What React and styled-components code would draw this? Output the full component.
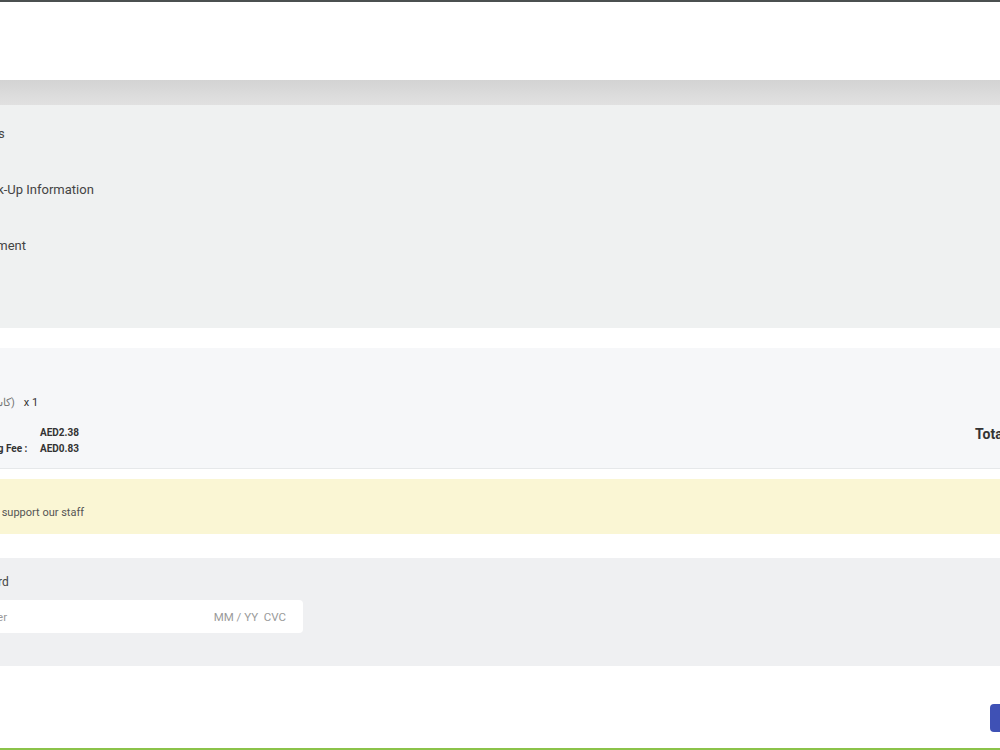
import styled, { createGlobalStyle } from "styled-components";

const GlobalStyle = createGlobalStyle`
	html, body {
		margin: 0;
		padding: 0;
		overflow: hidden;
		background: #ffffff;
		font-family: Roboto, "Liberation Sans", Arial, sans-serif;
	}
`;

const Page = styled.div`
	width: 1200px;
	height: 750px;
	margin-left: -100px;
	display: flex;
	flex-direction: column;
	border-top: 2px solid #4b5050;
	box-sizing: border-box;
`;

const Header = styled.header`
	height: 78px;
	background: #ffffff;
	flex-shrink: 0;
`;

const Band = styled.div`
	height: 25px;
	background: linear-gradient(#d3d3d3, #e1e1e1);
	flex-shrink: 0;
`;

const Steps = styled.section`
	background: #eff1f1;
	height: 223px;
	box-sizing: border-box;
	padding: 0 0 0 80px;
	flex-shrink: 0;
`;

const Step = styled.div`
	height: 56px;
	display: flex;
	align-items: center;
	font-size: 13px;
	color: #444;
	margin-left: ${(p) => p.$indent}px;
`;

const Summary = styled.section`
	margin-top: 20px;
	height: 121px;
	box-sizing: border-box;
	background: #f6f7f9;
	border-bottom: 1px solid #e6e8ea;
	padding: 48px 0 0 80px;
	display: flex;
	justify-content: space-between;
	flex-shrink: 0;
`;

const Items = styled.div`
	display: flex;
	flex-direction: column;
`;

const ItemLine = styled.div`
	font-size: 11px;
	color: #333;
	height: 14px;
	line-height: 14px;
	margin-left: -25px;
	display: flex;
	gap: 9px;
	margin-bottom: 15px;
`;

const Muted = styled.span`
	color: #777;
`;

const FeeRow = styled.div`
	display: grid;
	grid-template-columns: 87px auto;
	font-size: 10px;
	font-weight: 700;
	color: #333;
	height: 16px;
	line-height: 16px;
	margin-left: -27px;
`;

const TotalBox = styled.div`
	width: 125px;
	padding-top: 30px;
	font-size: 14px;
	font-weight: 700;
	color: #333;
`;

const Tip = styled.section`
	margin-top: 10px;
	height: 55px;
	box-sizing: border-box;
	background: #faf6d4;
	padding: 27px 0 0 80px;
	font-size: 11px;
	color: #555;
	flex-shrink: 0;
`;

const TipText = styled.div`
	margin-left: -37px;
`;

const Card = styled.section`
	margin-top: 24px;
	height: 108px;
	box-sizing: border-box;
	background: #eff0f2;
	padding: 17px 0 0 60px;
	flex-shrink: 0;
`;

const CardLabel = styled.div`
	font-size: 12px;
	color: #444;
	height: 14px;
	line-height: 14px;
	margin-left: -11px;
	margin-bottom: 11px;
`;

const CardInput = styled.div`
	width: 343px;
	height: 33px;
	background: #ffffff;
	border-radius: 4px;
	display: flex;
	align-items: center;
	justify-content: space-between;
	padding: 0 17px 0 0;
	box-sizing: border-box;
	font-size: 11.5px;
	color: #9a9a9a;
`;

const Placeholder = styled.span`
	margin-left: -19px;
`;

const Footer = styled.footer`
	flex: 1;
	display: flex;
	justify-content: flex-end;
	align-items: flex-start;
	padding: 38px 0 0;
	border-bottom: 2px solid #8bc34a;
`;

const PayButton = styled.button`
	width: 110px;
	height: 28px;
	background: #3f51b5;
	border: none;
	border-radius: 4px;
`;

export default function App() {
	return (
		<>
			<GlobalStyle />
			<Page>
				<Header />
				<Band />
				<Steps>
					<Step $indent={-8}>Items</Step>
					<Step $indent={-1}>Pick-Up Information</Step>
					<Step $indent={-5}>Payment</Step>
				</Steps>
				<Summary>
					<Items>
						<ItemLine>
							<Muted>Cup (كاسات)</Muted>
							<span>x 1</span>
						</ItemLine>
						<FeeRow>
							<span>Subtotal :</span>
							<span>AED2.38</span>
						</FeeRow>
						<FeeRow>
							<span>Processing Fee :</span>
							<span>AED0.83</span>
						</FeeRow>
					</Items>
					<TotalBox>Total</TotalBox>
				</Summary>
				<Tip>
					<TipText>Add a tip to support our staff</TipText>
				</Tip>
				<Card>
					<CardLabel>Credit Card</CardLabel>
					<CardInput>
						<Placeholder>Card number</Placeholder>
						<span>MM / YY &nbsp;CVC</span>
					</CardInput>
				</Card>
				<Footer>
					<PayButton />
				</Footer>
			</Page>
		</>
	);
}
